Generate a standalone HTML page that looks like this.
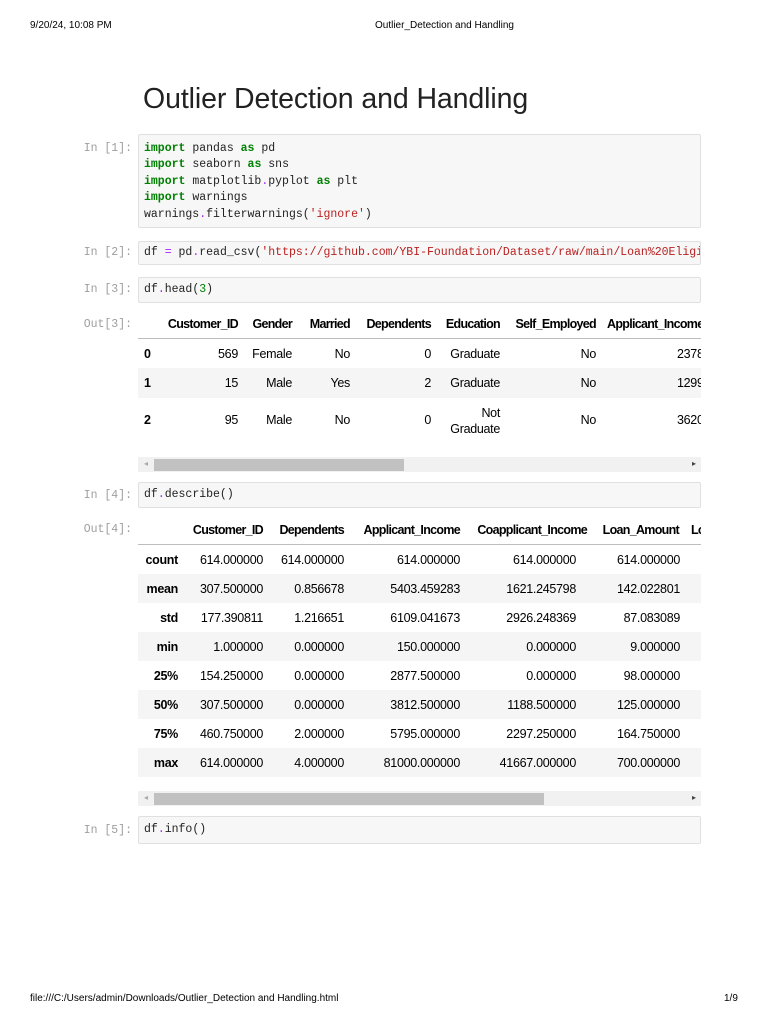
<!DOCTYPE html>
<html><head><meta charset="utf-8"><style>
*{margin:0;padding:0;box-sizing:border-box}
body{width:768px;height:1024px;background:#fff;position:relative;overflow:hidden;font-family:"Liberation Sans",sans-serif;color:#000}
.a{position:absolute;white-space:nowrap}
.hdr{font-size:10px;color:#000}
.prompt{font-family:"Liberation Mono",monospace;font-size:11.5px;color:#9e9e9e;text-align:right;width:60px;left:72px}
.cell{position:absolute;left:138px;width:563px;background:#f7f7f7;border:1px solid #e0e0e0;border-radius:2px}
.code{font-family:"Liberation Mono",monospace;font-size:11.5px;line-height:16.4px;color:#222;padding:6px 0 0 5px;white-space:pre;overflow:hidden}
.k{color:#008000;font-weight:bold}.s{color:#ba2121}.o{color:#aa22ff}.n{color:#008000}
.t{font-size:12.5px;color:#000;letter-spacing:-0.3px}
.b{font-weight:bold}
.h{letter-spacing:-0.7px}
.r{text-align:right}
.row{position:absolute;left:138px;width:563px}
.g{background:#f5f5f5}
.sb{position:absolute;left:138px;width:563px;height:15px;background:#f1f1f1}
.th{position:absolute;top:2px;height:12px;background:#c1c1c1}
</style></head><body>
<div class="a hdr" style="left:30px;top:20px">9/20/24, 10:08 PM</div>
<div class="a hdr" style="left:375px;top:20px">Outlier_Detection and Handling</div>
<div class="a" style="left:143px;top:83px;font-size:28.5px;color:#222;letter-spacing:-0.1px">Outlier Detection and Handling</div>

<div class="a prompt" style="top:142px">In [1]:</div>
<div class="cell code" style="top:134px;height:94px"><span class="k">import</span> pandas <span class="k">as</span> pd
<span class="k">import</span> seaborn <span class="k">as</span> sns
<span class="k">import</span> matplotlib<span class="o">.</span>pyplot <span class="k">as</span> plt
<span class="k">import</span> warnings
warnings<span class="o">.</span>filterwarnings(<span class="s">'ignore'</span>)</div>

<div class="a prompt" style="top:246px">In [2]:</div>
<div class="cell code" style="top:241px;height:24px;padding-top:3px">df <span class="o">=</span> pd<span class="o">.</span>read_csv(<span class="s">'https://github.com/YBI-Foundation/Dataset/raw/main/Loan%20Eligibility</span></div>

<div class="a prompt" style="top:283px">In [3]:</div>
<div class="cell code" style="top:277px;height:26px;padding-top:4px">df<span class="o">.</span>head(<span class="n">3</span>)</div>

<div class="a prompt" style="top:318px">Out[3]:</div>
<div class="row" style="top:338px;height:1px;background:#bdbdbd"></div>
<div class="row g" style="top:368px;height:30px"></div>
<div style="position:absolute;left:138px;top:310px;width:563px;height:140px;overflow:hidden">
<div class="a t b h r" style="right:463px;top:7px">Customer_ID</div>
<div class="a t b h r" style="right:409px;top:7px">Gender</div>
<div class="a t b h r" style="right:351px;top:7px">Married</div>
<div class="a t b h r" style="right:270px;top:7px">Dependents</div>
<div class="a t b h r" style="right:201px;top:7px">Education</div>
<div class="a t b h r" style="right:105px;top:7px">Self_Employed</div>
<div class="a t b h" style="left:469px;top:7px">Applicant_Income</div>

<div class="a t b" style="left:6px;top:37px">0</div>
<div class="a t r" style="right:463px;top:37px">569</div>
<div class="a t r" style="right:409px;top:37px">Female</div>
<div class="a t r" style="right:351px;top:37px">No</div>
<div class="a t r" style="right:270px;top:37px">0</div>
<div class="a t r" style="right:201px;top:37px">Graduate</div>
<div class="a t r" style="right:105px;top:37px">No</div>
<div class="a t" style="left:539px;top:37px">2378</div>

<div class="a t b" style="left:6px;top:66px">1</div>
<div class="a t r" style="right:463px;top:66px">15</div>
<div class="a t r" style="right:409px;top:66px">Male</div>
<div class="a t r" style="right:351px;top:66px">Yes</div>
<div class="a t r" style="right:270px;top:66px">2</div>
<div class="a t r" style="right:201px;top:66px">Graduate</div>
<div class="a t r" style="right:105px;top:66px">No</div>
<div class="a t" style="left:539px;top:66px">1299</div>

<div class="a t b" style="left:6px;top:103px">2</div>
<div class="a t r" style="right:463px;top:103px">95</div>
<div class="a t r" style="right:409px;top:103px">Male</div>
<div class="a t r" style="right:351px;top:103px">No</div>
<div class="a t r" style="right:270px;top:103px">0</div>
<div class="a t r" style="right:201px;top:95px;line-height:16px;text-align:right">Not<br>Graduate</div>
<div class="a t r" style="right:105px;top:103px">No</div>
<div class="a t" style="left:539px;top:103px">3620</div>
</div>
<div class="sb" style="top:457px"><div class="th" style="left:16px;width:250px"></div><div class="a" style="left:6px;top:2px;font-size:8px;color:#aaa">◂</div><div class="a" style="right:5px;top:2px;font-size:8px;color:#444">▸</div></div>

<div class="a prompt" style="top:489px">In [4]:</div>
<div class="cell code" style="top:482px;height:26px;padding-top:4px">df<span class="o">.</span>describe()</div>

<div class="a prompt" style="top:523px">Out[4]:</div>
<div class="row" style="top:544px;height:1px;background:#bdbdbd"></div>
<div class="row g" style="top:574px;height:29px"></div>
<div class="row g" style="top:632px;height:29px"></div>
<div class="row g" style="top:690px;height:29px"></div>
<div class="row g" style="top:748px;height:29px"></div>
<div style="position:absolute;left:138px;top:515px;width:563px;height:30px;overflow:hidden">
<div class="a t b h r" style="right:438px;top:8px">Customer_ID</div>
<div class="a t b h r" style="right:357px;top:8px">Dependents</div>
<div class="a t b h r" style="right:241px;top:8px">Applicant_Income</div>
<div class="a t b h r" style="right:114px;top:8px">Coapplicant_Income</div>
<div class="a t b h r" style="right:22px;top:8px">Loan_Amount</div>
<div class="a t b h" style="left:553px;top:8px">Loan</div>
</div>

<div style="position:absolute;left:138px;top:545px;width:563px;height:240px;overflow:hidden">
<div class="a t b r" style="right:523px;top:8px">count</div><div class="a t r" style="right:438px;top:8px">614.000000</div><div class="a t r" style="right:357px;top:8px">614.000000</div><div class="a t r" style="right:241px;top:8px">614.000000</div><div class="a t r" style="right:125px;top:8px">614.000000</div><div class="a t r" style="right:21px;top:8px">614.000000</div>
<div class="a t b r" style="right:523px;top:37px">mean</div><div class="a t r" style="right:438px;top:37px">307.500000</div><div class="a t r" style="right:357px;top:37px">0.856678</div><div class="a t r" style="right:241px;top:37px">5403.459283</div><div class="a t r" style="right:125px;top:37px">1621.245798</div><div class="a t r" style="right:21px;top:37px">142.022801</div>
<div class="a t b r" style="right:523px;top:66px">std</div><div class="a t r" style="right:438px;top:66px">177.390811</div><div class="a t r" style="right:357px;top:66px">1.216651</div><div class="a t r" style="right:241px;top:66px">6109.041673</div><div class="a t r" style="right:125px;top:66px">2926.248369</div><div class="a t r" style="right:21px;top:66px">87.083089</div>
<div class="a t b r" style="right:523px;top:95px">min</div><div class="a t r" style="right:438px;top:95px">1.000000</div><div class="a t r" style="right:357px;top:95px">0.000000</div><div class="a t r" style="right:241px;top:95px">150.000000</div><div class="a t r" style="right:125px;top:95px">0.000000</div><div class="a t r" style="right:21px;top:95px">9.000000</div>
<div class="a t b r" style="right:523px;top:124px">25%</div><div class="a t r" style="right:438px;top:124px">154.250000</div><div class="a t r" style="right:357px;top:124px">0.000000</div><div class="a t r" style="right:241px;top:124px">2877.500000</div><div class="a t r" style="right:125px;top:124px">0.000000</div><div class="a t r" style="right:21px;top:124px">98.000000</div>
<div class="a t b r" style="right:523px;top:153px">50%</div><div class="a t r" style="right:438px;top:153px">307.500000</div><div class="a t r" style="right:357px;top:153px">0.000000</div><div class="a t r" style="right:241px;top:153px">3812.500000</div><div class="a t r" style="right:125px;top:153px">1188.500000</div><div class="a t r" style="right:21px;top:153px">125.000000</div>
<div class="a t b r" style="right:523px;top:182px">75%</div><div class="a t r" style="right:438px;top:182px">460.750000</div><div class="a t r" style="right:357px;top:182px">2.000000</div><div class="a t r" style="right:241px;top:182px">5795.000000</div><div class="a t r" style="right:125px;top:182px">2297.250000</div><div class="a t r" style="right:21px;top:182px">164.750000</div>
<div class="a t b r" style="right:523px;top:211px">max</div><div class="a t r" style="right:438px;top:211px">614.000000</div><div class="a t r" style="right:357px;top:211px">4.000000</div><div class="a t r" style="right:241px;top:211px">81000.000000</div><div class="a t r" style="right:125px;top:211px">41667.000000</div><div class="a t r" style="right:21px;top:211px">700.000000</div>
</div>
<div class="sb" style="top:791px"><div class="th" style="left:16px;width:390px"></div><div class="a" style="left:6px;top:2px;font-size:8px;color:#aaa">◂</div><div class="a" style="right:5px;top:2px;font-size:8px;color:#444">▸</div></div>

<div class="a prompt" style="top:824px">In [5]:</div>
<div class="cell code" style="top:816px;height:28px;padding-top:5px">df<span class="o">.</span>info()</div>

<div class="a hdr" style="left:30px;top:993px">file:///C:/Users/admin/Downloads/Outlier_Detection and Handling.html</div>
<div class="a hdr" style="left:724px;top:993px">1/9</div>
</body></html>
